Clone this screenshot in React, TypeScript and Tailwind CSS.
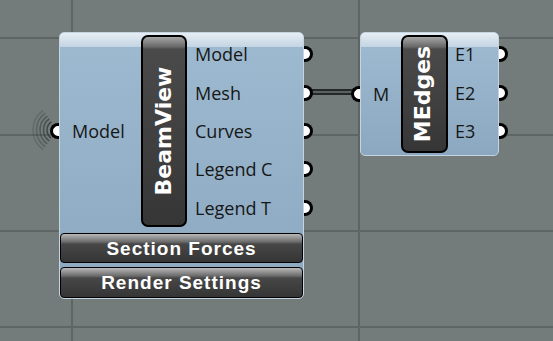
import React from "react";

const LABEL = "font-['Open_Sans',sans-serif] text-[18px] leading-none text-[#161616]";
const BODY =
  "bg-[linear-gradient(to_bottom,#e7eef4_0px,#c3d4e2_14px,#9db9d0_14px,#8ba8c0_100%)] border border-[#c4d4e1] rounded-[5px]";
const BAR =
  "bg-[linear-gradient(to_bottom,#a6a6a6_0px,#676767_10px,#4a4a4a_12px,#363636_100%)] border-2 border-black rounded-[7px]";
const BTN =
  "bg-[linear-gradient(to_bottom,#b9b9b9_0px,#6a6a6a_8px,#474747_10px,#353535_100%)] border-[1.5px] border-black rounded-[4px] flex items-center justify-center text-white font-bold font-['Liberation_Sans',Arial,sans-serif] text-[19px] tracking-[1px] leading-none";

function OutGrip() {
  return (
    <div className="absolute right-[-10px] top-1/2 -translate-y-1/2 w-[9px] h-[16px] rounded-r-full border-[3px] border-l-0 border-black bg-white" />
  );
}
function InGrip() {
  return (
    <div className="absolute left-[-10px] top-1/2 -translate-y-1/2 w-[9px] h-[16px] rounded-l-full border-[3px] border-r-0 border-black bg-white" />
  );
}

function Arcs() {
  const cx = 27;
  const cy = 25;
  const radii = [10, 13.5, 17, 20.5, 24];
  return (
    <svg className="absolute left-[30px] top-[105px]" width="30" height="50" viewBox="0 0 30 50">
      {radii.map((r, i) => {
        const a = (55 * Math.PI) / 180;
        const x = cx - r * Math.cos(a);
        const y1 = cy - r * Math.sin(a);
        const y2 = cy + r * Math.sin(a);
        return (
          <path
            key={r}
            d={`M ${x} ${y1} A ${r} ${r} 0 0 0 ${x} ${y2}`}
            fill="none"
            stroke="#333838"
            strokeWidth="1.5"
            opacity={0.8 - i * 0.14}
          />
        );
      })}
    </svg>
  );
}

export default function App() {
  const outs = ["Model", "Mesh", "Curves", "Legend C", "Legend T"];
  const eouts = ["E1", "E2", "E3"];
  return (
    <div className="relative w-[553px] h-[341px] overflow-hidden bg-[#737b7b]">
      {/* grid */}
      <div className="absolute left-[71px] top-0 w-[2px] h-full bg-[#5f6464]" />
      <div className="absolute left-[358px] top-0 w-[2px] h-full bg-[#5f6464]" />
      <div className="absolute left-0 top-[37px] w-full h-[2px] bg-[#5f6464]" />
      <div className="absolute left-0 top-[134px] w-full h-[2px] bg-[#5f6464]" />
      <div className="absolute left-0 top-[230px] w-full h-[2px] bg-[#5f6464]" />
      <div className="absolute left-0 top-[326px] w-full h-[2px] bg-[#5f6464]" />

      <Arcs />

      {/* wire */}
      <div className="absolute left-[311px] top-[89px] w-[42px] h-[6px] bg-[#5b6060] border-y-2 border-[#252828]" />

      {/* BeamView node */}
      <div className={`absolute left-[59px] top-[32px] w-[245px] h-[267px] flex flex-col pt-[2px] ${BODY}`}>
        <div className="flex h-[192px]">
          <div className="relative w-[81px] flex items-center pl-[12px]">
            <span className={LABEL}>Model</span>
            <InGrip />
          </div>
          <div className={`w-[46px] flex items-center justify-center ${BAR}`}>
            <span className="-rotate-90 whitespace-nowrap text-white font-bold font-['DejaVu_Sans',sans-serif] text-[22px] leading-none">
              BeamView
            </span>
          </div>
          <div className="flex-1 flex flex-col pl-[8px]">
            {outs.map((o) => (
              <div key={o} className="relative flex-1 flex items-center">
                <span className={LABEL}>{o}</span>
                <OutGrip />
              </div>
            ))}
          </div>
        </div>
        <div className={`mt-[6px] h-[30px] ${BTN}`}>Section Forces</div>
        <div className={`mt-[4px] h-[31px] ${BTN}`}>Render Settings</div>
      </div>

      {/* MEdges node */}
      <div className={`absolute left-[360px] top-[32px] w-[139px] h-[124px] flex pt-[2px] ${BODY}`}>
        <div className="relative w-[40px] h-[118px] flex items-center pl-[12px]">
          <span className={LABEL}>M</span>
          <InGrip />
        </div>
        <div className={`w-[47px] h-[118px] flex items-center justify-center ${BAR}`}>
          <span className="-rotate-90 -translate-x-[1px] whitespace-nowrap text-white font-bold font-['DejaVu_Sans',sans-serif] text-[22px] leading-none">
            MEdges
          </span>
        </div>
        <div className="flex-1 flex flex-col pl-[7px]">
          {eouts.map((o) => (
            <div key={o} className="relative h-[38.5px] flex items-center">
              <span className={LABEL}>{o}</span>
              <OutGrip />
            </div>
          ))}
        </div>
      </div>
    </div>
  );
}
